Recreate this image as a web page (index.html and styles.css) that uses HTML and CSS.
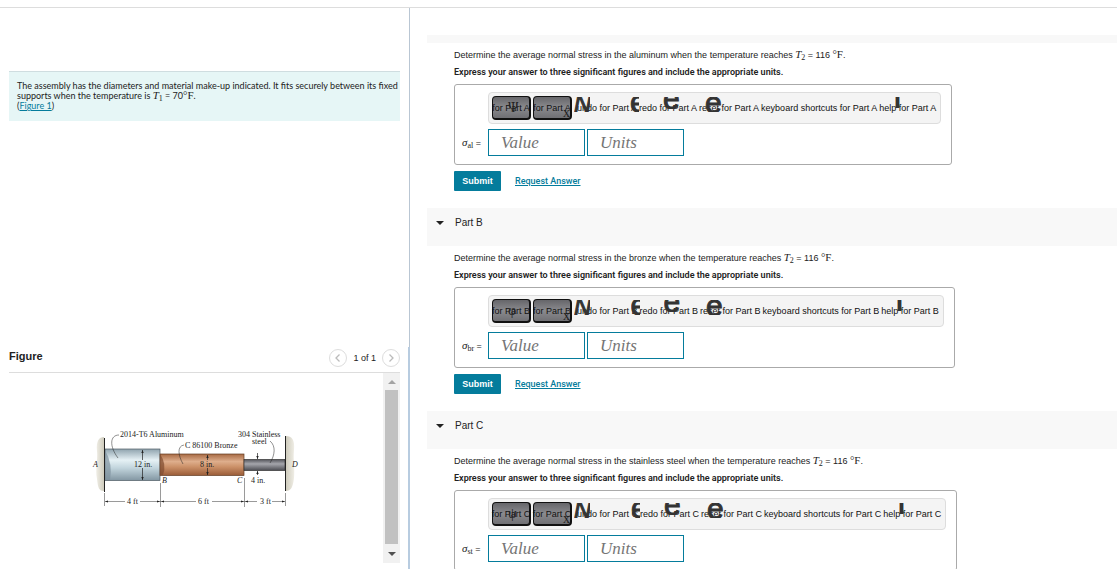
FILE: index.html
```html
<!DOCTYPE html>
<html lang="en">
<head>
<meta charset="utf-8">
<title>Average normal stress</title>
<link rel="stylesheet" href="styles.css">
</head>
<body>
<div class="page">
<aside class="left">
  <div class="intro">
    <p>The assembly has the diameters and material make-up indicated. It fits securely between its fixed supports when the temperature is <span class="math"><i>T</i><sub>1</sub></span> = 70<span class="math">°F</span>.</p>
    <p>(<a href="#figure">Figure 1</a>)</p>
  </div>
  <section class="figure" id="figure">
    <header class="figure-head">
      <h2>Figure</h2>
      <nav class="pager">
        <button class="round" aria-label="Previous figure"><svg width="8" height="8" viewBox="0 0 8 8"><path d="M5.500 .5 2 4l3.500 3.500"/></svg></button>
        <span>1 of 1</span>
        <button class="round" aria-label="Next figure"><svg width="8" height="8" viewBox="0 0 8 8"><path d="M2.500 .5 6 4 2.500 7.500"/></svg></button>
      </nav>
    </header>
    <div class="viewer">
      <svg class="drawing" width="230" height="95" viewBox="80 420 230 95" role="img" aria-label="Stepped rod between two fixed walls">
        <defs>
          <linearGradient id="al" x2="0" y2="1"><stop offset="0" stop-color="#8fa3ae"/><stop offset=".35" stop-color="#e6f1f5"/><stop offset=".6" stop-color="#c2d5dd"/><stop offset="1" stop-color="#8296a2"/></linearGradient>
          <linearGradient id="br" x2="0" y2="1"><stop offset="0" stop-color="#a86a44"/><stop offset=".35" stop-color="#deae8c"/><stop offset=".6" stop-color="#cb9068"/><stop offset="1" stop-color="#9a5c38"/></linearGradient>
          <linearGradient id="st" x2="0" y2="1"><stop offset="0" stop-color="#55565c"/><stop offset=".4" stop-color="#a5a6ac"/><stop offset="1" stop-color="#4b4c52"/></linearGradient>
          <linearGradient id="wl"><stop offset="0" stop-color="#f0eee6"/><stop offset="1" stop-color="#cfccbd"/></linearGradient>
          <linearGradient id="wr"><stop offset="0" stop-color="#cfccbd"/><stop offset="1" stop-color="#f0eee6"/></linearGradient>
        </defs>
        <path d="M104 437c-5 0-8 4-7 14 1 9-2 18 0 28 1 9 2 12 7 12z" fill="url(#wl)"/>
        <path d="M286 436c6 0 9 4 8 14-1 10 1 18 0 28-1 9-3 13-8 13z" fill="url(#wr)"/>
        <rect x="105" y="449" width="55" height="31.500" fill="url(#al)" stroke="#4e5b63" stroke-width=".7"/>
        <path d="M105 450q8 14 5 30h-5z" fill="#7f929e" opacity=".7"/>
        <rect x="160" y="454" width="84" height="21.500" fill="url(#br)" stroke="#633c24" stroke-width=".7"/>
        <path d="M160 454q7 10 3 21h-3z" fill="#7d4a2e" opacity=".7"/>
        <rect x="244" y="459.500" width="41" height="11" fill="url(#st)" stroke="#333" stroke-width=".7"/>
        <g stroke="#222" stroke-width=".8" fill="none">
          <path d="M104.500 438v54M285.500 436v55" stroke-width="1"/>
          <path d="M142.500 450v10M142.500 468v12M207.500 455v5M207.500 468v7M257.500 453v6M257.500 471v4" stroke-width=".7"/>
          <path d="M104.500 493v13M160.500 483v24M244.500 478v29M285.500 493v13M105 501.500h20M140 501.500h56M212 501.500h45M272 501.500h13" stroke="#555" stroke-width=".6"/>
          <path d="M119 435c-9 0-10 11-1 23M184 445c-7 1-6 10-1 19M270 441c6 5 5 14 0 22" stroke-width=".5"/>
        </g>
        <path d="m142.500 450-1.200 3h2.400zM142.500 480l-1.200-3h2.400zM207.500 455l-1.200 3h2.400zM207.500 475l-1.200-3h2.400zM257.500 459l-1.200-3h2.400zM257.500 471l-1.200 3h2.400zM105 501.500l3-1v2zM160 501.500l-3-1v2zM161 501.500l3-1v2zM244 501.500l-3-1v2zM245 501.500l3-1v2zM285 501.500l-3-1v2z" fill="#222"/>
        <g class="labels">
          <text x="120" y="437">2014-T6 Aluminum</text>
          <text x="185" y="448">C 86100 Bronze</text>
          <text x="238" y="437">304 Stainless</text>
          <text x="252" y="444">steel</text>
          <text x="134" y="467">12 in.</text>
          <text x="200" y="467">8 in.</text>
          <text x="251" y="483">4 in.</text>
          <text x="127" y="504">4 ft</text>
          <text x="198" y="504">6 ft</text>
          <text x="260" y="504">3 ft</text>
          <g font-style="italic"><text x="93" y="467">A</text><text x="162" y="483">B</text><text x="237" y="483">C</text><text x="292" y="467">D</text></g>
        </g>
      </svg>
      <div class="scrollbar" aria-hidden="true"><span class="up"></span><span class="thumb"></span><span class="down"></span></div>
    </div>
  </section>
</aside>
<main class="right">
  <div class="band-end"></div>
  <section class="part">
    <p class="question">Determine the average normal stress in the aluminum when the temperature reaches <span class="math"><i>T</i><sub>2</sub></span> = 116 <span class="math">°F</span>.</p>
    <p class="hint">Express your answer to three significant figures and include the appropriate units.</p>
    <div class="answer">
      <div class="toolbar">
        <button class="key"><span>for Part A</span><b class="k-mid">Ψ</b></button>
        <button class="key"><span>for Part A</span><b class="k-end">x</b></button>
        <button class="tool undo">undo for Part A<b class="g-n">N</b><b class="g-c">є</b></button>
        <button class="tool">redo for Part A<b class="g-e">e</b></button>
        <button class="tool">reset for Part A<b class="g-o">e</b></button>
        <button class="tool">keyboard shortcuts for Part A</button>
        <button class="tool">help for Part A<b class="g-l">l</b></button>
      </div>
      <div class="entry">
        <label for="va"><span class="math"><i>σ</i><sub>al</sub></span> =</label>
        <input id="va" placeholder="Value"><input placeholder="Units" aria-label="Units for Part A">
      </div>
    </div>
    <div class="actions"><button class="submit">Submit</button><a href="#answer-a">Request Answer</a></div>
  </section>
  <h2 class="band"><span class="caret"></span>Part B</h2>
  <section class="part">
    <p class="question">Determine the average normal stress in the bronze when the temperature reaches <span class="math"><i>T</i><sub>2</sub></span> = 116 <span class="math">°F</span>.</p>
    <p class="hint">Express your answer to three significant figures and include the appropriate units.</p>
    <div class="answer">
      <div class="toolbar">
        <button class="key"><span>for Part B</span><b class="k-mid">φ</b></button>
        <button class="key"><span>for Part B</span><b class="k-end">x</b></button>
        <button class="tool undo">undo for Part B<b class="g-n">N</b><b class="g-c">є</b></button>
        <button class="tool">redo for Part B<b class="g-e">e</b></button>
        <button class="tool">reset for Part B<b class="g-o">e</b></button>
        <button class="tool">keyboard shortcuts for Part B</button>
        <button class="tool">help for Part B<b class="g-l">l</b></button>
      </div>
      <div class="entry">
        <label for="vb"><span class="math"><i>σ</i><sub>br</sub></span> =</label>
        <input id="vb" placeholder="Value"><input placeholder="Units" aria-label="Units for Part B">
      </div>
    </div>
    <div class="actions"><button class="submit">Submit</button><a href="#answer-b">Request Answer</a></div>
  </section>
  <h2 class="band"><span class="caret"></span>Part C</h2>
  <section class="part">
    <p class="question">Determine the average normal stress in the stainless steel when the temperature reaches <span class="math"><i>T</i><sub>2</sub></span> = 116 <span class="math">°F</span>.</p>
    <p class="hint">Express your answer to three significant figures and include the appropriate units.</p>
    <div class="answer">
      <div class="toolbar">
        <button class="key"><span>for Part C</span><b class="k-mid">ψ</b></button>
        <button class="key"><span>for Part C</span><b class="k-end">x</b></button>
        <button class="tool undo">undo for Part C<b class="g-n">N</b><b class="g-c">є</b></button>
        <button class="tool">redo for Part C<b class="g-e">e</b></button>
        <button class="tool">reset for Part C<b class="g-o">e</b></button>
        <button class="tool">keyboard shortcuts for Part C</button>
        <button class="tool">help for Part C<b class="g-l">l</b></button>
      </div>
      <div class="entry">
        <label for="vc"><span class="math"><i>σ</i><sub>st</sub></span> =</label>
        <input id="vc" placeholder="Value"><input placeholder="Units" aria-label="Units for Part C">
      </div>
    </div>
  </section>
</main>
</div>
</body>
</html>
```
FILE: styles.css
```css
* { box-sizing: border-box; }
body { margin: 0; background: #fff; color: #222; font: 9px/10px "Liberation Sans", Arial, sans-serif; }
p, h2 { margin: 0; }
button { font: inherit; color: inherit; padding: 0; border: 0; background: none; cursor: pointer; }
a { color: #047c9c; }
.page { display: flex; height: 100vh; padding-top: 7px; overflow: hidden; }
.page::before { content: ""; position: absolute; top: 7px; left: 0; right: 0; height: 1px; background: #ddd; }
.math { font-family: "Liberation Serif", serif; font-size: 11px; line-height: 1px; }
sub { font-size: 8px; line-height: 0; vertical-align: -2px; }

.left { flex: 0 0 410px; display: flex; flex-direction: column; justify-content: space-between; border-right: 1px solid #b9c6d3; padding: 64px 9px 6px; }
.intro { background: #e6f6f6; border-top: 1px solid #cfdde0; padding: 9px 0 10px 8px; font-family: Lato, "Liberation Sans", sans-serif; }
.figure { position: relative; }
.figure::after { content: ""; position: absolute; top: 3px; right: -10px; bottom: -6px; width: 2px; background: #b8cce0; }
.figure-head { display: flex; align-items: center; justify-content: space-between; height: 29px; border-bottom: 1px solid #ddd; }
.figure-head h2 { padding-bottom: 4px; font: bold 11px/12px "Liberation Sans", Arial, sans-serif; }
.pager { display: flex; align-items: center; gap: 6px; font: 9px/12px "Liberation Sans", Arial, sans-serif; }
.round { display: grid; place-items: center; width: 18px; height: 18px; border: 1px solid #ddd; border-radius: 50%; background: #fff; }
.round path { fill: none; stroke: #bbb; stroke-width: 1.3; }
.viewer { display: flex; justify-content: space-between; height: 190px; }
.drawing { margin: 47px 0 0 71px; }
.labels { font: 8px "Liberation Serif", serif; fill: #222; }
.scrollbar { display: flex; flex-direction: column; align-items: center; justify-content: space-between; width: 17px; padding: 7px 2px; background: #f1f1f1; }
.thumb { flex: 1; width: 13px; margin: 6px 0 8px; background: #c1c1c1; }
.up, .down { border: 4px solid transparent; border-top: 0; border-bottom: 4px solid #a3a3a3; }
.down { border-bottom: 0; border-top: 4px solid #505050; }

.right { flex: 1; min-width: 0; padding: 28px 0 0 17px; }
.band-end { height: 8px; background: #f8f8f8; }
.band { display: flex; align-items: center; gap: 11px; height: 38px; padding: 0 9px 8px; background: #f8f8f8; font: 10px/12px "Liberation Sans", Arial, sans-serif; }
.caret { border: 4px solid transparent; border-bottom: 0; border-top-color: #222; }
.part { padding: 4px 0 17px 27px; }
.question, .hint { line-height: 16px; white-space: nowrap; }
.hint { margin: 1px 0 4px; font-family: Roboto, "Liberation Sans", sans-serif; font-weight: 600; }
.answer { width: fit-content; border: 1px solid #aaa; border-radius: 3px; padding: 7px 10px 8px 7px; }
.toolbar { display: flex; align-items: center; gap: 2px; height: 32px; margin-left: 26px; padding: 0 4px 0 3px; border: 1px solid #ddd; border-radius: 4px; background: #f4f4f4; color: #111; }
.key, .tool { position: relative; white-space: nowrap; }
.key { width: 39px; height: 24px; border: 1px solid #111; border-width: 1px 2px 2px 1px; border-radius: 4px; background: linear-gradient(#66666a, #8a8a8e 50%, #707074); }
.key span { display: flex; justify-content: center; }
.undo { margin-left: 3px; }
.tool b { position: absolute; top: -6px; height: 15px; overflow: hidden; color: #333; font-weight: normal; -webkit-text-stroke: 1px #333; }
.tool .g-n { left: -3px; width: 16px; font-size: 24px; font-style: italic; line-height: 14px; }
.tool .g-c { right: -2px; width: 9px; font-size: 30px; line-height: 9px; }
.tool .g-e { left: 24px; height: 12px; font-size: 30px; line-height: 3px; }
.tool .g-o { left: 6px; font-size: 30px; line-height: 11px; }
.tool .g-l { left: 16px; height: 11px; font-size: 20px; line-height: 9px; -webkit-text-stroke: 2px #333; }
.key b { position: absolute; font: 14px "Liberation Serif", serif; color: #222; }
.k-mid { left: 15px; top: 3px; }
.k-end { right: 0; bottom: -3px; }
.entry { display: flex; align-items: center; gap: 2px; margin-top: 5px; }
.entry label { min-width: 24px; white-space: nowrap; }
.entry input { width: 97px; height: 27px; padding: 0 12px; border: 1px solid #047c9c; background: #fff; font: italic 17px "Liberation Serif", serif; }
.entry input::placeholder { color: #757575; opacity: 1; }
.actions { display: flex; align-items: center; gap: 14px; margin-top: 6px; }
.submit { width: 47px; height: 20px; border-radius: 1px; background: #047c9c; color: #fff; font-weight: bold; }
.actions a { font-family: Roboto, sans-serif; font-weight: 500; }
```
